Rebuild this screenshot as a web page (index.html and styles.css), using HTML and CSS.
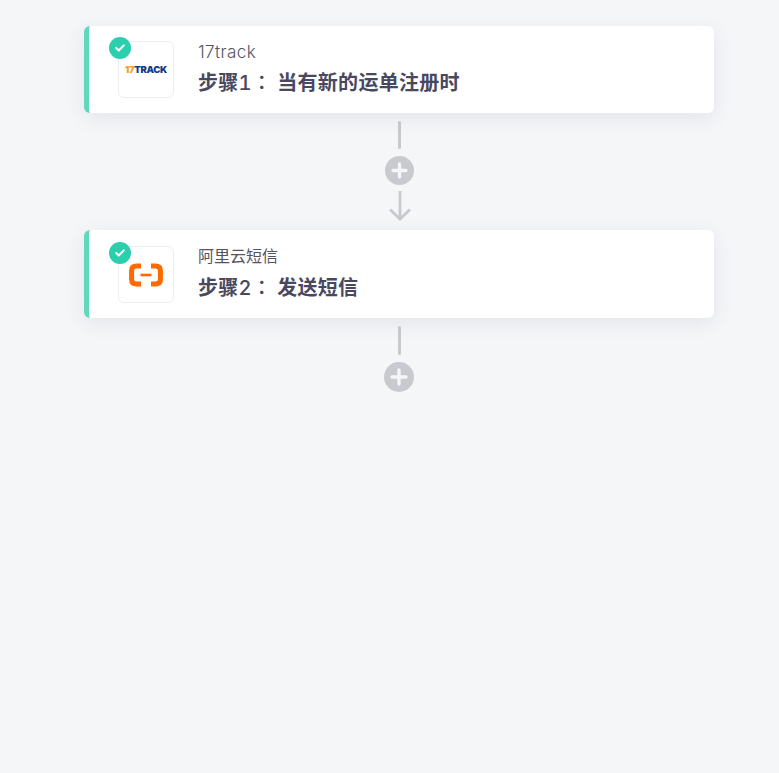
FILE: index.html
```html
<!DOCTYPE html>
<html lang="zh-CN">
<head>
  <meta charset="UTF-8" />
  <title>流程</title>
  <link rel="stylesheet" href="styles.css">
</head>
<body>
  <div class="flow">

    <div class="card card-first">
      <span class="check">
        <svg width="10" height="8" viewBox="0 0 10 8"><path d="M1.2 4l2.6 2.5L8.8 1.4" fill="none" stroke="#fff" stroke-width="2" stroke-linecap="round" stroke-linejoin="round"/></svg>
      </span>
      <div class="logo">
        <span class="logo-17"><span class="logo-num">17</span><span class="logo-track">TRACK</span></span>
      </div>
      <div class="info">
        <div class="app-name app-name-latin">17track</div>
        <div class="step-name">步骤<span class="step-no" lang="zh-TW">1：</span> 当有新的运单注册时</div>
      </div>
    </div>

    <div class="connector connector-first">
      <span class="line"></span>
      <span class="add">
        <svg width="29" height="29" viewBox="0 0 29 29"><circle cx="14.5" cy="14.5" r="14.5" fill="#c8cad0"/><path d="M14.5 8v13M8 14.5h13" stroke="#f5f6f8" stroke-width="3.4" stroke-linecap="round"/></svg>
      </span>
      <svg class="arrow" width="24" height="31" viewBox="0 0 24 31"><path d="M12 1v28M2 19.5l10 9.5 10-9.5" fill="none" stroke="#c8cad0" stroke-width="2.8"/></svg>
    </div>

    <div class="card">
      <span class="check check-second">
        <svg width="10" height="8" viewBox="0 0 10 8"><path d="M1.2 4l2.6 2.5L8.8 1.4" fill="none" stroke="#fff" stroke-width="2" stroke-linecap="round" stroke-linejoin="round"/></svg>
      </span>
      <div class="logo">
        <svg class="logo-ali" width="36" height="24" viewBox="0 0 36 24"><path d="M13 3H8.500Q3.600 3 3.600 7.400v9.200q0 4.400 4.900 4.400H13M23 3h4.500q4.900 0 4.900 4.400v9.200q0 4.400-4.900 4.400H23" fill="none" stroke="#ff6a00" stroke-width="5"/><path d="M12.500 12h11" stroke="#ff6a00" stroke-width="2.600"/></svg>
      </div>
      <div class="info">
        <div class="app-name">阿里云短信</div>
        <div class="step-name">步骤<span class="step-no" lang="zh-TW">2：</span> 发送短信</div>
      </div>
    </div>

    <div class="connector connector-last">
      <span class="line"></span>
      <span class="add">
        <svg width="30" height="30" viewBox="0 0 30 30"><circle cx="15" cy="15" r="15" fill="#c8cad0"/><path d="M15 8v14M8 15h14" stroke="#f5f6f8" stroke-width="3.4" stroke-linecap="round"/></svg>
      </span>
    </div>

  </div>
</body>
</html>
```

FILE: styles.css
```css
* {
  box-sizing: border-box;
}

html, body {
  height: 100%;
}

body {
  margin: 0;
  background-color: #f5f6f8;
  font-family: Inter, "Noto Sans CJK SC", sans-serif;
  overflow: hidden;
}

.flow {
  width: 630px;
  margin-left: 84px;
  padding-top: 26px;
}

.card {
  position: relative;
  display: flex;
  align-items: center;
  height: 88px;
  padding-left: 29px;
  background: #fff;
  border-left: 5px solid #5fd8bc;
  border-radius: 6px;
  box-shadow: 0 5px 20px rgba(40, 50, 80, 0.09);
}

.card-first {
  height: 87px;
}

.check {
  position: absolute;
  top: 11px;
  left: 20px;
  display: flex;
  align-items: center;
  justify-content: center;
  width: 22px;
  height: 22px;
  background: #2bcfae;
  border-radius: 50%;
}

.check-second {
  top: 12px;
}

.logo {
  display: flex;
  align-items: center;
  justify-content: center;
  flex: none;
  width: 56px;
  height: 57px;
  background: #fff;
  border: 1px solid #ebedf0;
  border-radius: 6px;
}

.logo-ali {
  margin-top: 2px;
}

.logo-17 {
  font-family: Inter, sans-serif;
  font-size: 9.5px;
  font-weight: 900;
  letter-spacing: -0.35px;
  white-space: nowrap;
}

.logo-num {
  color: #f7a11a;
}

.logo-track {
  color: #143a8c;
}

.info {
  margin-left: 24px;
  margin-top: -2px;
}

.app-name {
  font-size: 16px;
  font-weight: 400;
  line-height: 22px;
  color: #55535f;
}

.app-name-latin {
  margin-bottom: 2px;
  font-size: 17px;
  font-weight: 300;
  line-height: 20px;
  letter-spacing: 0.4px;
}

.step-name {
  margin-top: 8px;
  font-size: 20px;
  font-weight: 700;
  line-height: 26px;
  letter-spacing: 0.3px;
  color: #484860;
}

.step-no {
  font-family: Inter, "Noto Sans CJK TC", sans-serif;
  font-weight: 500;
  font-variant-numeric: tabular-nums;
}

.connector {
  display: flex;
  flex-direction: column;
  align-items: center;
  height: 117px;
  padding-top: 8px;
}

.connector-first {
  padding-left: 1px;
}

.connector-last {
  height: auto;
}

.line {
  width: 3px;
  height: 28px;
  background: #c8cad0;
  border-radius: 2px;
}

.connector-last .line {
  height: 29px;
}

.add {
  display: block;
  height: 29px;
  margin-top: 7px;
}

.connector-last .add {
  height: 30px;
}

.arrow {
  display: block;
  margin-top: 5px;
}
```
